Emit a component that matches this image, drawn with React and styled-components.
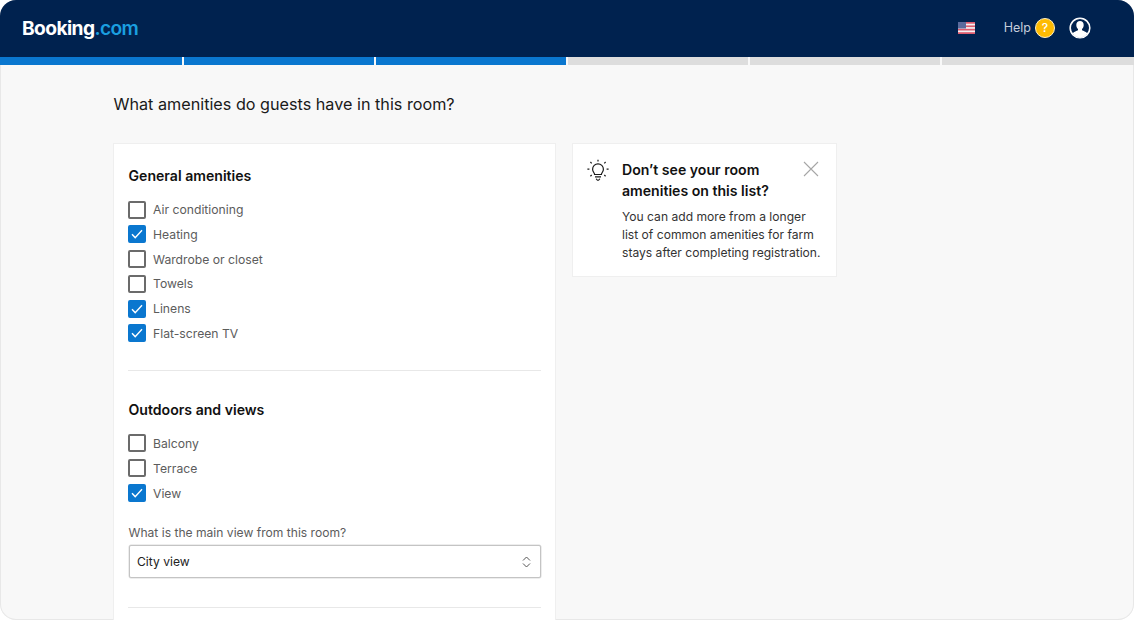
import React from "react"
import styled, { createGlobalStyle } from "styled-components"

const general = [
  { label: "Air conditioning" },
  { label: "Heating", checked: true },
  { label: "Wardrobe or closet" },
  { label: "Towels" },
  { label: "Linens", checked: true },
  { label: "Flat-screen TV", checked: true },
]

const outdoors = [
  { label: "Balcony" },
  { label: "Terrace" },
  { label: "View", checked: true },
]

const steps = [
  { width: 182, done: true },
  { width: 190, done: true },
  { width: 190, done: true },
  { width: 180 },
  { width: 190 },
  { width: 192 },
]

const CheckRow = ({ label, checked }) => (
  <Row>
    <Box $checked={checked}>
      {checked && (
        <svg width="12" height="10" viewBox="0 0 12 10" fill="none">
          <path d="M1 5.2 4.2 8.6 11 1.2" stroke="#fff" strokeWidth="1.4" />
        </svg>
      )}
    </Box>
    <RowLabel>{label}</RowLabel>
  </Row>
)

const Flag = () => (
  <svg width="17" height="12" viewBox="0 0 17 12">
    <rect width="17" height="12" fill="#f3f1f4" />
    <rect y="0" width="17" height="1.7" fill="#dc5b6e" />
    <rect y="3.4" width="17" height="1.7" fill="#dc5b6e" />
    <rect y="6.8" width="17" height="1.7" fill="#dc5b6e" />
    <rect y="10.2" width="17" height="1.8" fill="#dc5b6e" />
    <rect width="8" height="6.5" fill="#5a6a9c" />
  </svg>
)

const Avatar = () => (
  <svg width="22" height="22" viewBox="0 0 22 22">
    <circle cx="11" cy="11" r="10" fill="#fff" stroke="#fff" strokeWidth="1.2" />
    <circle cx="11" cy="11" r="9" fill="#00224f" />
    <path d="M3.6 16.4c1.2-2 4.2-2.4 5.4-3.2v-1.3C7.9 11 7.3 9.6 7.3 8c0-2.4 1.5-4 3.7-4s3.7 1.600 3.700 4c0 1.600-.6 3-1.700 3.900v1.300c1.200.8 4.200 1.200 5.400 3.200A9 9 0 0 1 11 20a9 9 0 0 1-7.400-3.600Z" fill="#fff" />
  </svg>
)

const Bulb = () => (
  <svg width="22" height="24" viewBox="0 0 22 24" fill="none" stroke="#1a1a1a" strokeWidth="1.2">
    <path d="M7.600 15.500c0-1.700-2-2.600-2-5.300a5.400 5.400 0 0 1 10.800 0c0 2.700-2 3.600-2 5.300Z" />
    <path d="M8 17.800h6M9.200 19.800c.5 1 1.100 1.500 1.800 1.500s1.300-.5 1.800-1.500" />
    <path d="M11 .8v1.800M3.400 3l1.300 1.300M18.600 3l-1.300 1.300M.4 10.200h2M19.600 10.200h2M3.400 17.200l1.300-1.200M18.600 17.200l-1.300-1.200" />
  </svg>
)

const App = () => (
  <Page>
    <GlobalStyle />
    <Header>
      <Logo>
        Booking<LogoAccent>.com</LogoAccent>
      </Logo>
      <HeaderTools>
        <Flag />
        <HelpLink>
          Help <HelpBadge>?</HelpBadge>
        </HelpLink>
        <Avatar />
      </HeaderTools>
    </Header>
    <Progress>
      {steps.map((step, i) => (
        <Step key={i} $width={step.width} $done={step.done} />
      ))}
    </Progress>
    <Content>
      <Title>What amenities do guests have in this room?</Title>
      <Columns>
        <MainCard>
          <SectionTitle>General amenities</SectionTitle>
          <CheckList>
            {general.map((item) => (
              <CheckRow key={item.label} {...item} />
            ))}
          </CheckList>
          <Divider $top={27.5} $bottom={30} />
          <SectionTitle>Outdoors and views</SectionTitle>
          <CheckList>
            {outdoors.map((item) => (
              <CheckRow key={item.label} {...item} />
            ))}
          </CheckList>
          <FieldLabel>What is the main view from this room?</FieldLabel>
          <Select>
            City view
            <svg width="9" height="12" viewBox="0 0 9 12" fill="none" stroke="#555" strokeWidth="1">
              <path d="M1 4.500 4.500 1 8 4.500M1 7.500 4.500 11 8 7.500" />
            </svg>
          </Select>
          <Divider $top={29} $bottom={40} />
        </MainCard>
        <TipCard>
          <Bulb />
          <TipBody>
            <TipTitle>Don’t see your room amenities on this list?</TipTitle>
            <TipText>
              You can add more from a longer list of common amenities for farm stays after completing registration.
            </TipText>
          </TipBody>
          <CloseIcon width="16" height="16" viewBox="0 0 16 16" stroke="#a6a6a6" strokeWidth="1.100">
            <path d="M1 1l14 14M15 1 1 15" />
          </CloseIcon>
        </TipCard>
      </Columns>
    </Content>
  </Page>
)

export default App

const GlobalStyle = createGlobalStyle`
  html, body {
    margin: 0;
    background: #fff;
  }
  * {
    box-sizing: border-box;
  }
`

const Page = styled.div`
  width: 1134px;
  height: 620px;
  overflow: hidden;
  position: relative;
  border-radius: 16px;
  background: #f8f8f8;
  font-family: Inter, "Liberation Sans", sans-serif;
  color: #1a1a1a;
  box-shadow: inset 0 0 0 1px #e8e8e8;
`

const Header = styled.header`
  height: 57px;
  background: #00224f;
  display: flex;
  align-items: center;
  justify-content: space-between;
  padding: 0 43px 2px 22px;
`

const Logo = styled.div`
  font-size: 19.200px;
  font-weight: 700;
  letter-spacing: -0.6px;
  color: #fff;
`

const LogoAccent = styled.span`
  color: #1a9fe0;
  font-weight: 600;
`

const HeaderTools = styled.div`
  display: flex;
  align-items: center;
`

const HelpLink = styled.div`
  display: flex;
  align-items: center;
  gap: 4px;
  margin: 0 14px 0 29px;
  font-size: 12.500px;
  color: #c4cddb;
`

const HelpBadge = styled.span`
  width: 20px;
  height: 20px;
  border-radius: 50%;
  background: #febb02;
  border: 1px solid #fff0c4;
  color: #fff;
  font-size: 12px;
  font-weight: 500;
  display: flex;
  align-items: center;
  justify-content: center;
`

const Progress = styled.div`
  display: flex;
  gap: 2px;
  height: 8px;
  margin-right: -10px;
`

const Step = styled.div`
  flex: 0 0 ${(p) => p.$width}px;
  background: ${(p) => (p.$done ? "#0a77cf" : "#dddddd")};
`

const Content = styled.main`
  padding: 29px 0 0 113px;
`

const Title = styled.h1`
  margin: 0 0 28px 0.5px;
  font-size: 16.200px;
  line-height: 21px;
  font-weight: 400;
`

const Columns = styled.div`
  display: flex;
  align-items: flex-start;
  gap: 16px;
`

const MainCard = styled.section`
  width: 443px;
  flex: none;
  background: #fff;
  border: 1px solid #efefef;
  padding: 23px 14px 0;
`

const SectionTitle = styled.h2`
  margin: 0 0 15.500px 0.5px;
  font-size: 14.100px;
  line-height: 18px;
  font-weight: 600;
  color: #111;
`

const CheckList = styled.div`
  display: flex;
  flex-direction: column;
  gap: 6.800px;
`

const Row = styled.div`
  display: flex;
  align-items: center;
  gap: 7px;
  height: 18px;
`

const Box = styled.span`
  width: 18px;
  height: 18px;
  border-radius: 2px;
  border: 2px solid ${(p) => (p.$checked ? "#0a77cf" : "#6b6b6b")};
  background: ${(p) => (p.$checked ? "#0a77cf" : "#fff")};
  display: flex;
  align-items: center;
  justify-content: center;
`

const RowLabel = styled.span`
  font-size: 12.200px;
  color: #5c5c5c;
`

const Divider = styled.hr`
  border: 0;
  height: 1px;
  background: #e8e8e8;
  margin: ${(p) => p.$top}px 0 ${(p) => p.$bottom}px;
`

const FieldLabel = styled.label`
  display: block;
  margin: 23px 0 4px 0.5px;
  font-size: 12.100px;
  line-height: 16px;
  color: #5c5c5c;
`

const Select = styled.div`
  height: 33px;
  margin-left: 1px;
  padding: 0 9px 0 7px;
  display: flex;
  align-items: center;
  justify-content: space-between;
  font-size: 12.100px;
  color: #222;
  background: #fff;
  border: 1px solid #c4c4c4;
  border-radius: 2px;
  box-shadow: 0 0 0 0.5px #dcdcdc;
`

const TipCard = styled.aside`
  position: relative;
  width: 265px;
  padding: 15px 14px 14.500px;
  display: flex;
  gap: 13px;
  background: #fff;
  border: 1px solid #efefef;
`

const TipBody = styled.div`
  flex: 1;
`

const TipTitle = styled.h3`
  margin: 0 30px 6.500px 0;
  font-size: 14.100px;
  line-height: 21px;
  font-weight: 600;
  color: #111;
`

const TipText = styled.p`
  margin: 0;
  font-size: 12.100px;
  line-height: 18px;
  color: #333;
`

const CloseIcon = styled.svg`
  position: absolute;
  top: 17px;
  right: 17px;
  fill: none;
`
